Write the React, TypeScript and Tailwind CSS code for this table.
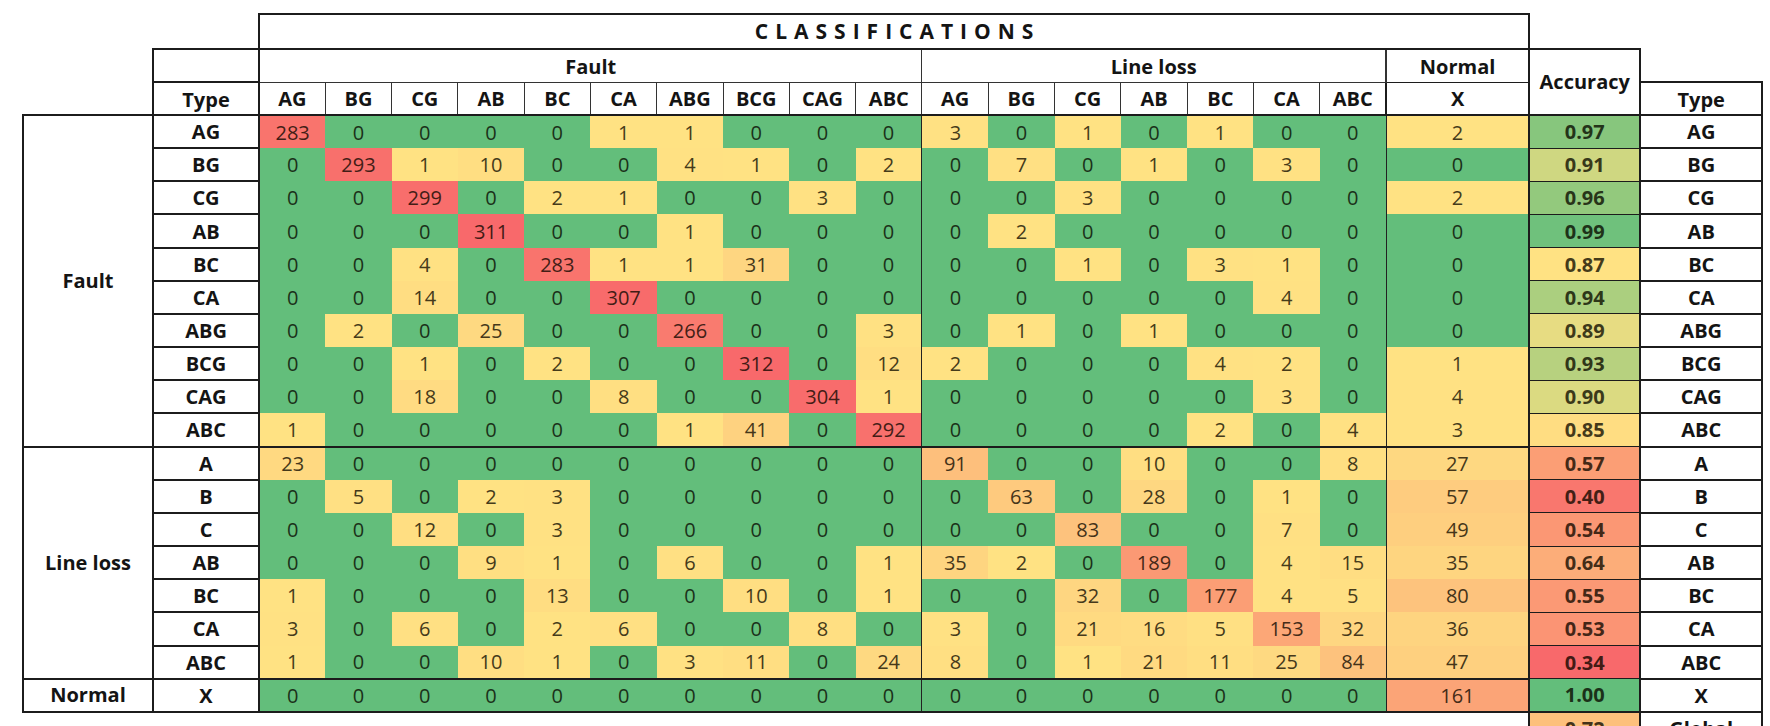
import React from "react";

type RGB = [number, number, number];
const G: RGB = [99, 190, 123];
const Y: RGB = [255, 226, 131];
const R: RGB = [248, 105, 107];
const clamp = (t: number) => Math.max(0, Math.min(1, t));
const mix = (a: RGB, b: RGB, t: number): RGB =>
  [0, 1, 2].map((i) => Math.round(a[i] + (b[i] - a[i]) * clamp(t))) as RGB;
const css = (c: RGB) => `rgb(${c[0]},${c[1]},${c[2]})`;
const dark = (c: RGB) =>
  `rgb(${Math.round(c[0] * 0.27)},${Math.round(c[1] * 0.26)},${Math.round(c[2] * 0.2)})`;

const cellBg = (v: number): RGB => (v === 0 ? G : mix(Y, R, (v - 1) / 311));
const accBg = (v: number): RGB =>
  v >= 0.87 ? mix(Y, G, (v - 0.87) / 0.13) : mix(Y, R, (0.87 - v) / 0.53);

const HEAD = ["AG", "BG", "CG", "AB", "BC", "CA", "ABG", "BCG", "CAG", "ABC", "AG", "BG", "CG", "AB", "BC", "CA", "ABC"];

type Row = { group?: string; span?: number; type: string; vals: number[]; acc: string; last?: boolean };

const ROWS: Row[] = [
  { group: "Fault", span: 10, type: "AG", vals: [283, 0, 0, 0, 0, 1, 1, 0, 0, 0, 3, 0, 1, 0, 1, 0, 0, 2], acc: "0.97" },
  { type: "BG", vals: [0, 293, 1, 10, 0, 0, 4, 1, 0, 2, 0, 7, 0, 1, 0, 3, 0, 0], acc: "0.91" },
  { type: "CG", vals: [0, 0, 299, 0, 2, 1, 0, 0, 3, 0, 0, 0, 3, 0, 0, 0, 0, 2], acc: "0.96" },
  { type: "AB", vals: [0, 0, 0, 311, 0, 0, 1, 0, 0, 0, 0, 2, 0, 0, 0, 0, 0, 0], acc: "0.99" },
  { type: "BC", vals: [0, 0, 4, 0, 283, 1, 1, 31, 0, 0, 0, 0, 1, 0, 3, 1, 0, 0], acc: "0.87" },
  { type: "CA", vals: [0, 0, 14, 0, 0, 307, 0, 0, 0, 0, 0, 0, 0, 0, 0, 4, 0, 0], acc: "0.94" },
  { type: "ABG", vals: [0, 2, 0, 25, 0, 0, 266, 0, 0, 3, 0, 1, 0, 1, 0, 0, 0, 0], acc: "0.89" },
  { type: "BCG", vals: [0, 0, 1, 0, 2, 0, 0, 312, 0, 12, 2, 0, 0, 0, 4, 2, 0, 1], acc: "0.93" },
  { type: "CAG", vals: [0, 0, 18, 0, 0, 8, 0, 0, 304, 1, 0, 0, 0, 0, 0, 3, 0, 4], acc: "0.90" },
  { type: "ABC", vals: [1, 0, 0, 0, 0, 0, 1, 41, 0, 292, 0, 0, 0, 0, 2, 0, 4, 3], acc: "0.85", last: true },
  { group: "Line loss", span: 7, type: "A", vals: [23, 0, 0, 0, 0, 0, 0, 0, 0, 0, 91, 0, 0, 10, 0, 0, 8, 27], acc: "0.57" },
  { type: "B", vals: [0, 5, 0, 2, 3, 0, 0, 0, 0, 0, 0, 63, 0, 28, 0, 1, 0, 57], acc: "0.40" },
  { type: "C", vals: [0, 0, 12, 0, 3, 0, 0, 0, 0, 0, 0, 0, 83, 0, 0, 7, 0, 49], acc: "0.54" },
  { type: "AB", vals: [0, 0, 0, 9, 1, 0, 6, 0, 0, 1, 35, 2, 0, 189, 0, 4, 15, 35], acc: "0.64" },
  { type: "BC", vals: [1, 0, 0, 0, 13, 0, 0, 10, 0, 1, 0, 0, 32, 0, 177, 4, 5, 80], acc: "0.55" },
  { type: "CA", vals: [3, 0, 6, 0, 2, 6, 0, 0, 8, 0, 3, 0, 21, 16, 5, 153, 32, 36], acc: "0.53" },
  { type: "ABC", vals: [1, 0, 0, 10, 1, 0, 3, 11, 0, 24, 8, 0, 1, 21, 11, 25, 84, 47], acc: "0.34", last: true },
  { group: "Normal", span: 1, type: "X", vals: [0, 0, 0, 0, 0, 0, 0, 0, 0, 0, 0, 0, 0, 0, 0, 0, 0, 161], acc: "1.00", last: true },
];

function DataCell({ v, j, last }: { v: number; j: number; last?: boolean }) {
  const bg = cellBg(v);
  let cls = "p-0 pt-[1px] text-center align-middle font-medium";
  if (j === 9 || j === 16) cls += " border-r border-r-[#222]";
  if (j === 17) cls += " border-r-2 border-r-[#1c1c1c]";
  if (last) cls += " border-b-2 border-b-[#1c1c1c]";
  return (
    <td className={cls} style={{ backgroundColor: css(bg), color: dark(bg) }}>
      {v}
    </td>
  );
}

export default function App() {
  const acc = (s: string) => accBg(parseFloat(s));
  return (
    <div className="w-[1770px] h-[726px] overflow-hidden bg-white [font-family:'Open_Sans',sans-serif] text-[20px] text-[#141414]">
      <table className="ml-[22px] mt-[13px] border-collapse table-fixed w-[1739px] leading-none">
        <colgroup>
          <col className="w-[130px]" />
          <col className="w-[106px]" />
          {HEAD.map((_, i) => (
            <col key={i} className="w-[66.3px]" />
          ))}
          <col className="w-[143px]" />
          <col className="w-[111px]" />
          <col className="w-[122px]" />
        </colgroup>
        <tbody>
          <tr className="h-[35px]">
            <td colSpan={2} className="p-0"></td>
            <td colSpan={18} className="p-0 pl-[7px] border-2 border-[#1c1c1c] text-center align-middle font-bold text-[21px] tracking-[7px]">
              CLASSIFICATIONS
            </td>
            <td colSpan={2} className="p-0"></td>
          </tr>
          <tr className="h-[33px]">
            <td className="p-0"></td>
            <td className="p-0 border-t-2 border-l-2 border-r-2 border-b-2 border-[#1c1c1c]"></td>
            <td colSpan={10} className="p-0 pt-[2px] border-b border-r border-[#333] text-center align-middle font-bold">
              Fault
            </td>
            <td colSpan={7} className="p-0 pt-[2px] border-b border-r-2 border-[#333] text-center align-middle font-bold">
              Line loss
            </td>
            <td className="p-0 pt-[2px] border-b border-r-2 border-[#1c1c1c] text-center align-middle font-bold">
              Normal
            </td>
            <td rowSpan={2} className="p-0 border-2 border-[#1c1c1c] text-center align-middle font-bold">
              Accuracy
            </td>
            <td className="p-0"></td>
          </tr>
          <tr className="h-[33px]">
            <td className="p-0"></td>
            <td className="p-0 pt-[2px] border-l-2 border-r-2 border-b-2 border-[#1c1c1c] text-center align-middle font-bold">
              Type
            </td>
            {HEAD.map((h, i) => (
              <td
                key={i}
                className={
                  i === 16
                    ? "p-0 pt-[2px] border-b-2 border-b-[#1c1c1c] border-r-2 border-r-[#1c1c1c] text-center align-middle font-bold"
                    : "p-0 pt-[2px] border-b-2 border-b-[#1c1c1c] border-r border-r-[#333] text-center align-middle font-bold"
                }
              >
                {h}
              </td>
            ))}
            <td className="p-0 pt-[2px] border-b-2 border-r-2 border-[#1c1c1c] text-center align-middle font-bold">X</td>
            <td className="p-0 pt-[2px] border-2 border-[#1c1c1c] text-center align-middle font-bold">Type</td>
          </tr>
          {ROWS.map((row, i) => {
            const a = acc(row.acc);
            return (
              <tr key={i} className="h-[33.17px]">
                {row.group && (
                  <td rowSpan={row.span} className="p-0 border-2 border-[#1c1c1c] text-center align-middle font-bold">
                    {row.group}
                  </td>
                )}
                <td className="p-0 pt-[1px] border-l-2 border-r-2 border-b-2 border-[#1c1c1c] text-center align-middle font-bold">
                  {row.type}
                </td>
                {row.vals.map((v, j) => (
                  <DataCell key={j} v={v} j={j} last={row.last} />
                ))}
                <td
                  className="p-0 pt-[1px] border-l-2 border-r-2 border-b border-[#1c1c1c] text-center align-middle font-bold"
                  style={{ backgroundColor: css(a), color: dark(a) }}
                >
                  {row.acc}
                </td>
                <td className="p-0 pt-[1px] border-2 border-[#1c1c1c] text-center align-middle font-bold">
                  {row.type}
                </td>
              </tr>
            );
          })}
          <tr className="h-[33px]">
            <td colSpan={20} className="p-0"></td>
            <td
              className="p-0 pt-[1px] border-2 border-[#1c1c1c] text-center align-middle font-bold"
              style={{ backgroundColor: css(acc("0.72")), color: dark(acc("0.72")) }}
            >
              0.72
            </td>
            <td className="p-0 pt-[1px] border-2 border-[#1c1c1c] text-center align-middle font-bold">Global</td>
          </tr>
        </tbody>
      </table>
    </div>
  );
}
